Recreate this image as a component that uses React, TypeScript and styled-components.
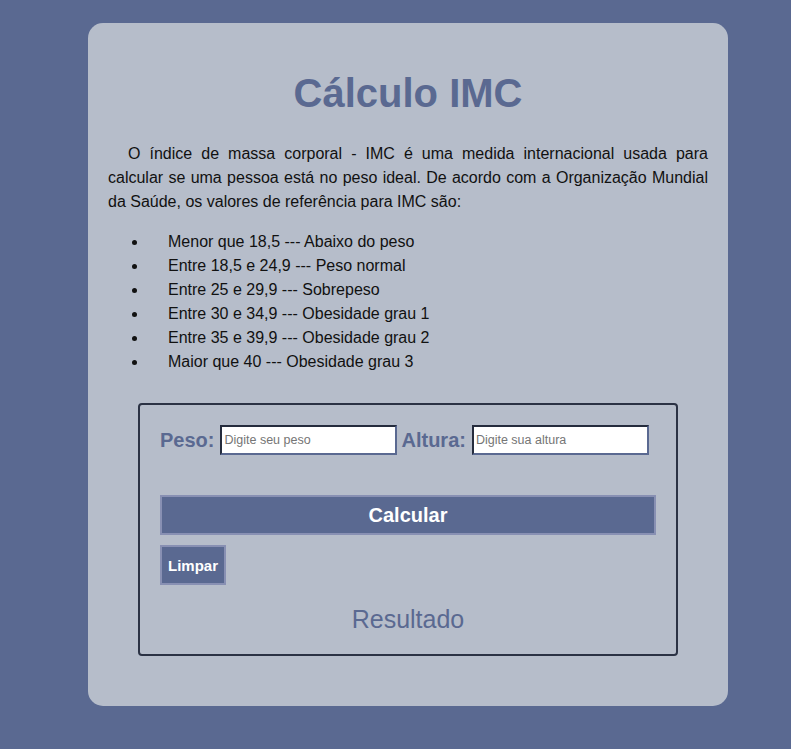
import styled, { createGlobalStyle } from "styled-components";

const GlobalStyle = createGlobalStyle`
  body {
    margin: 8px;
    background: #5a6991;
    font-family: "Liberation Sans", Arial, sans-serif;
  }
`;

const Card = styled.main`
  width: 640px;
  box-sizing: border-box;
  margin: 15px 80px;
  padding: 20px 20px 20px;
  background: #b6bdca;
  border-radius: 15px;
  color: #111;
`;

const Title = styled.h1`
  margin: 28px 0 26px;
  font-size: 40px;
  font-weight: bold;
  text-align: center;
  color: #5a6991;
`;

const Intro = styled.p`
  margin: 16px 0;
  font-size: 16px;
  line-height: 24px;
  text-align: justify;
  text-indent: 20px;
`;

const List = styled.ul`
  margin: 16px 0;
  padding-left: 40px;
  font-size: 16px;
  line-height: 24px;
`;

const Item = styled.li`
  padding-left: 20px;
`;

const Form = styled.form`
  width: 540px;
  box-sizing: border-box;
  margin: 29px auto 30px;
  padding: 20px;
  border: 2px solid #2b3244;
  border-radius: 4px;
  display: flex;
  flex-direction: column;
  align-items: flex-start;
`;

const Row = styled.div`
  display: flex;
  align-items: center;
  gap: 4px;
`;

const Field = styled.label`
  display: flex;
  align-items: center;
  gap: 6px;
  font-size: 20px;
  font-weight: bold;
  color: #5a6991;
`;

const Input = styled.input`
  width: 177px;
  height: 30px;
  box-sizing: border-box;
  padding: 1px 2px;
  border: 2px inset #5a6991;
  background: #fff;
  font-family: "Liberation Sans", Arial, sans-serif;
  font-size: 12.5px;
  &::placeholder {
    color: #757575;
  }
`;

const Button = styled.button<{ $wide?: boolean }>`
  box-sizing: border-box;
  width: ${(p) => (p.$wide ? "496px" : "66px")};
  height: 40px;
  margin-top: ${(p) => (p.$wide ? "40px" : "10px")};
  padding: 0;
  background: #5a6991;
  border: 2px solid #8890b3;
  color: #fff;
  font-family: "Liberation Sans", Arial, sans-serif;
  font-size: ${(p) => (p.$wide ? "20px" : "15px")};
  font-weight: bold;
  cursor: pointer;
`;

const Result = styled.div`
  align-self: stretch;
  margin-top: 20px;
  font-size: 25px;
  line-height: 29px;
  text-align: center;
  color: #5a6991;
`;

const faixas = [
  "Menor que 18,5 --- Abaixo do peso",
  "Entre 18,5 e 24,9 --- Peso normal",
  "Entre 25 e 29,9 --- Sobrepeso",
  "Entre 30 e 34,9 --- Obesidade grau 1",
  "Entre 35 e 39,9 --- Obesidade grau 2",
  "Maior que 40 --- Obesidade grau 3",
];

export default function App() {
  return (
    <>
      <GlobalStyle />
      <Card>
        <Title>Cálculo IMC</Title>
        <Intro>
          O índice de massa corporal - IMC é uma medida internacional usada para
          calcular se uma pessoa está no peso ideal. De acordo com a Organização
          Mundial da Saúde, os valores de referência para IMC são:
        </Intro>
        <List>
          {faixas.map((f) => (
            <Item key={f}>{f}</Item>
          ))}
        </List>
        <Form onSubmit={(e) => e.preventDefault()}>
          <Row>
            <Field>
              Peso:
              <Input placeholder="Digite seu peso" />
            </Field>
            <Field>
              Altura:
              <Input placeholder="Digite sua altura" />
            </Field>
          </Row>
          <Button $wide type="submit">
            Calcular
          </Button>
          <Button type="button">Limpar</Button>
          <Result>Resultado</Result>
        </Form>
      </Card>
    </>
  );
}
